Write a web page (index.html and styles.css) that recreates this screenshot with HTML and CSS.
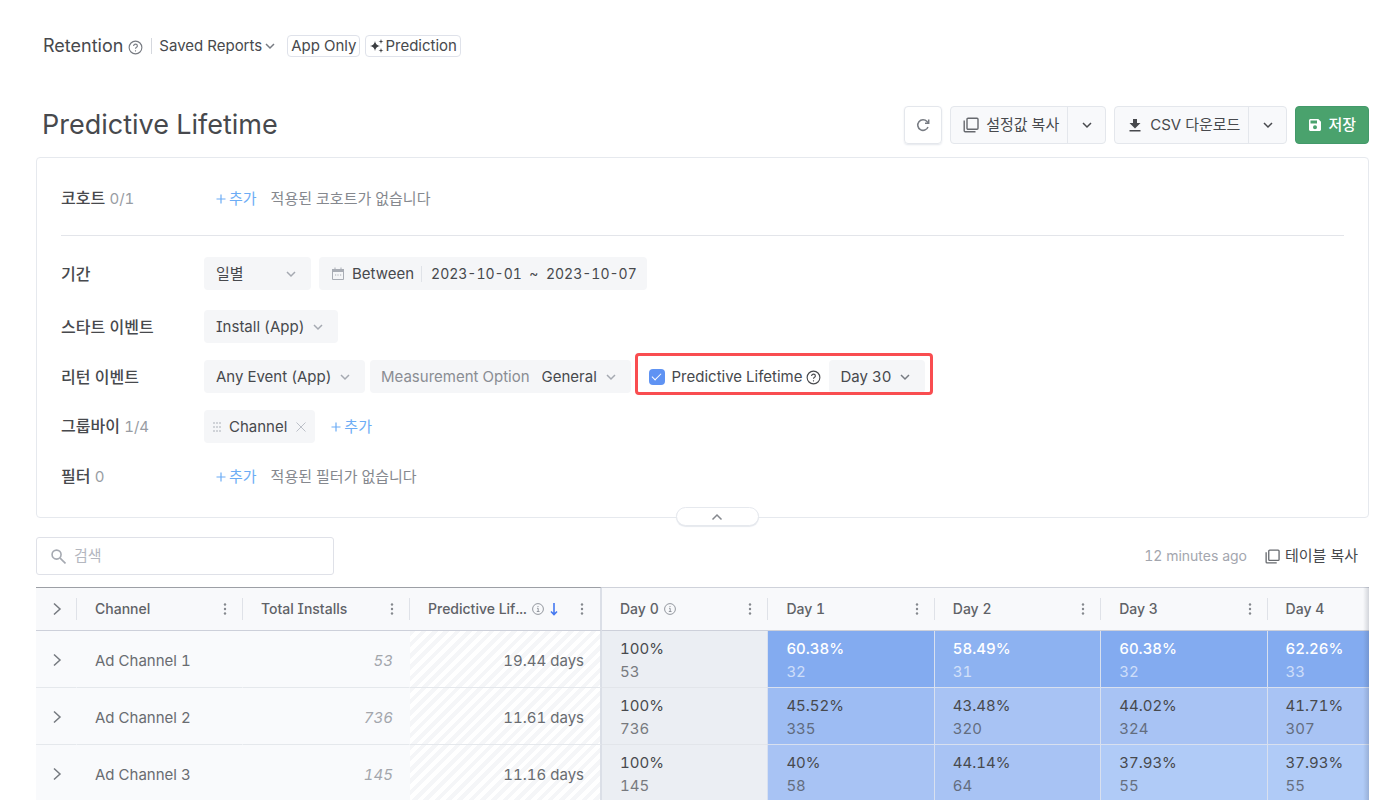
FILE: index.html
```html
<!DOCTYPE html>
<html lang="ko">
<head>
  <meta charset="UTF-8">
  <meta name="viewport" content="width=device-width, initial-scale=1">
  <title>Retention - Predictive Lifetime</title>
  <link rel="stylesheet" href="styles.css">
</head>
<body>

  <!-- 공통 아이콘 -->
  <svg class="sprite" aria-hidden="true">
    <symbol id="chevron" viewBox="0 0 12 12"><path d="M2 4l4 4 4-4"/></symbol>
    <symbol id="chevron-up" viewBox="0 0 12 12"><path d="M1.500 8.500L6 4l4.500 4.500"/></symbol>
    <symbol id="expand" viewBox="0 0 12 14"><path d="M3 1.500L9 7l-6 5.500"/></symbol>
    <symbol id="help" viewBox="0 0 16 16"><circle cx="8" cy="8" r="6.800"/><path d="M6 6.400c0-1.200.9-2 2-2s2 .8 2 1.900c0 1.500-2 1.500-2 3"/><path d="M8 11v1.200"/></symbol>
    <symbol id="info" viewBox="0 0 12 12"><circle cx="6" cy="6" r="5.400"/><path d="M5 5.300h1.200v3.200M4.800 8.500h2.700M6 3v1"/></symbol>
    <symbol id="copy" viewBox="0 0 16 16"><rect x="4" y="1.200" width="11" height="11" rx="1"/><path d="M1.200 3.500v10.300c0 .6.4 1 1 1h10.300"/></symbol>
    <symbol id="plus" viewBox="0 0 10 10"><path d="M5 .5v9M.5 5h9"/></symbol>
    <symbol id="dots" viewBox="0 0 4 12"><circle cx="2" cy="1.500" r="1.200"/><circle cx="2" cy="6" r="1.200"/><circle cx="2" cy="10.500" r="1.200"/></symbol>
  </svg>

  <header class="topbar">
    <span class="crumb">Retention</span>
    <svg class="icon help"><use href="#help"/></svg>
    <button class="saved">Saved Reports <svg class="icon chev"><use href="#chevron"/></svg></button>
    <span class="tag">App Only</span>
    <span class="tag"><svg class="spark" viewBox="0 0 14 14"><path d="M5 2Q5.600 6.400 10 7 5.600 7.600 5 12 4.400 7.600 0 7 4.400 6.400 5 2z"/><path d="M5 4l1.200 1.800L8 7 6.200 8.200 5 10 3.800 8.200 2 7l1.800-1.200z"/><path d="M11 0l.6 1.900 1.900.6-1.900.6L11 5l-.6-1.900-1.900-.6 1.900-.6zM11 9l.6 1.900 1.900.6-1.900.6L11 14l-.6-1.900-1.900-.6 1.900-.6z"/></svg>Prediction</span>
  </header>

  <main>
    <div class="title-row">
      <h1>Predictive Lifetime</h1>
      <div class="actions">
        <button class="btn refresh" aria-label="새로고침"><svg class="icon" viewBox="0 0 14 14"><path d="M12 9A5.300 5.300 0 1 1 11 3.500l1.500 1.500"/><path d="M12.700 1.500v3.800H9"/></svg></button>
        <div class="split">
          <button><svg class="icon copy"><use href="#copy"/></svg>설정값 복사</button>
          <button class="more" aria-label="더보기"><svg class="icon chev"><use href="#chevron"/></svg></button>
        </div>
        <div class="split">
          <button><svg class="fill download" viewBox="0 0 14 14"><path d="M5 1h4v4h3.500L7 10.500 1.500 5H5zM1.500 12h11v1.500h-11z"/></svg>CSV 다운로드</button>
          <button class="more" aria-label="더보기"><svg class="icon chev"><use href="#chevron"/></svg></button>
        </div>
        <button class="btn save"><svg class="fill" viewBox="0 0 14 14"><path fill-rule="evenodd" d="M2.500 1h7.800L13 3.700v7.800c0 .8-.7 1.500-1.500 1.500h-9C1.700 13 1 12.300 1 11.500v-9C1 1.700 1.700 1 2.500 1zm0 1.500v3h6.500v-3zM7 7.300a2 2 0 1 0 0 4 2 2 0 0 0 0-4z"/></svg>저장</button>
      </div>
    </div>

    <section class="panel">
      <div class="row cohort">
        <div class="name">코호트 <span>0/1</span></div>
        <button class="add"><svg class="icon"><use href="#plus"/></svg>추가</button>
        <span class="empty">적용된 코호트가 없습니다</span>
      </div>

      <div class="row period">
        <label class="name" for="period">기간</label>
        <div class="pick wide">
          <select id="period"><option>일별</option></select>
          <svg class="icon chev"><use href="#chevron"/></svg>
        </div>
        <button class="pill date">
          <svg class="calendar" viewBox="0 0 14 14"><path d="M1.500 2.500h11v10h-11z"/><path class="bar" d="M1 2h12v3H1z"/><path d="M4 .5V3M10 .5V3M4 8h1.200M6.400 8h1.200M9 8h1.200"/></svg>
          <span class="between">Between</span>
          <span class="range">2023-10-01 &nbsp;~&nbsp; 2023-10-07</span>
        </button>
      </div>

      <div class="row">
        <label class="name" for="start">스타트 이벤트</label>
        <div class="pick">
          <select id="start"><option>Install (App)</option></select>
          <svg class="icon chev"><use href="#chevron"/></svg>
        </div>
      </div>

      <div class="row">
        <label class="name" for="return">리턴 이벤트</label>
        <div class="pick return">
          <select id="return"><option>Any Event (App)</option></select>
          <svg class="icon chev"><use href="#chevron"/></svg>
        </div>
        <div class="pick measure">
          <label for="option">Measurement Option</label>
          <select id="option"><option>General</option></select>
          <svg class="icon chev"><use href="#chevron"/></svg>
        </div>
        <div class="predictive">
          <input type="checkbox" id="predictive" checked>
          <label for="predictive">Predictive Lifetime</label>
          <svg class="icon help"><use href="#help"/></svg>
          <div class="pick">
            <select aria-label="Day"><option>Day 30</option></select>
            <svg class="icon chev"><use href="#chevron"/></svg>
          </div>
        </div>
      </div>

      <div class="row">
        <div class="name">그룹바이 <span>1/4</span></div>
        <div class="pill group">
          <svg class="grip" viewBox="0 0 8 12"><circle cx="1" cy="2" r="1"/><circle cx="4" cy="2" r="1"/><circle cx="7" cy="2" r="1"/><circle cx="1" cy="6" r="1"/><circle cx="4" cy="6" r="1"/><circle cx="7" cy="6" r="1"/><circle cx="1" cy="10" r="1"/><circle cx="4" cy="10" r="1"/><circle cx="7" cy="10" r="1"/></svg>
          Channel
          <button aria-label="삭제"><svg class="icon" viewBox="0 0 10 10"><path d="M.5.5l9 9M9.500.5l-9 9"/></svg></button>
        </div>
        <button class="add"><svg class="icon"><use href="#plus"/></svg>추가</button>
      </div>

      <div class="row">
        <div class="name">필터 <span>0</span></div>
        <button class="add"><svg class="icon"><use href="#plus"/></svg>추가</button>
        <span class="empty">적용된 필터가 없습니다</span>
      </div>

      <button class="collapse" aria-label="접기"><svg class="icon"><use href="#chevron-up"/></svg></button>
    </section>

    <div class="tools">
      <label class="search">
        <svg class="icon" viewBox="0 0 14 14"><circle cx="5.200" cy="5.200" r="4.200"/><path d="M8.500 8.500l5 5"/></svg>
        <input type="text" placeholder="검색" aria-label="검색">
      </label>
      <span class="ago">12 minutes ago</span>
      <button class="copy-table"><svg class="icon copy"><use href="#copy"/></svg>테이블 복사</button>
    </div>

    <div class="table-wrap">
      <table>
        <colgroup>
          <col class="c-toggle"><col class="c-channel"><col class="c-installs"><col class="c-life">
          <col><col><col><col><col>
        </colgroup>
        <thead>
          <tr>
            <th class="pin"><div class="head toggle"><svg class="icon expand"><use href="#expand"/></svg></div></th>
            <th class="pin"><div class="head">Channel<svg class="dots"><use href="#dots"/></svg></div></th>
            <th class="pin"><div class="head">Total Installs<svg class="dots"><use href="#dots"/></svg></div></th>
            <th class="pin edge"><div class="head">Predictive Lif...<svg class="icon info"><use href="#info"/></svg><svg class="sort" viewBox="0 0 8 14"><path d="M4 1v11M1 9.500l3 3 3-3"/></svg><svg class="dots"><use href="#dots"/></svg></div></th>
            <th><div class="head">Day 0<svg class="icon info"><use href="#info"/></svg><svg class="dots"><use href="#dots"/></svg></div></th>
            <th><div class="head">Day 1<svg class="dots"><use href="#dots"/></svg></div></th>
            <th><div class="head">Day 2<svg class="dots"><use href="#dots"/></svg></div></th>
            <th><div class="head">Day 3<svg class="dots"><use href="#dots"/></svg></div></th>
            <th><div class="head">Day 4</div></th>
          </tr>
        </thead>
        <tbody>
          <tr>
            <td class="toggle"><svg class="icon expand"><use href="#expand"/></svg></td>
            <td>Ad Channel 1</td>
            <td class="installs">53</td>
            <td class="life edge">19.44 days</td>
            <td class="day zero">100%<span>53</span></td>
            <td class="day h5">60.38%<span>32</span></td>
            <td class="day h4">58.49%<span>31</span></td>
            <td class="day h5">60.38%<span>32</span></td>
            <td class="day h5">62.26%<span>33</span></td>
          </tr>
          <tr>
            <td class="toggle"><svg class="icon expand"><use href="#expand"/></svg></td>
            <td>Ad Channel 2</td>
            <td class="installs">736</td>
            <td class="life edge">11.61 days</td>
            <td class="day zero">100%<span>736</span></td>
            <td class="day h3">45.52%<span>335</span></td>
            <td class="day h2">43.48%<span>320</span></td>
            <td class="day h2">44.02%<span>324</span></td>
            <td class="day h2">41.71%<span>307</span></td>
          </tr>
          <tr>
            <td class="toggle"><svg class="icon expand"><use href="#expand"/></svg></td>
            <td>Ad Channel 3</td>
            <td class="installs">145</td>
            <td class="life edge">11.16 days</td>
            <td class="day zero">100%<span>145</span></td>
            <td class="day h2">40%<span>58</span></td>
            <td class="day h2">44.14%<span>64</span></td>
            <td class="day h1">37.93%<span>55</span></td>
            <td class="day h1">37.93%<span>55</span></td>
          </tr>
        </tbody>
      </table>
    </div>
  </main>

</body>
</html>
```
FILE: styles.css
```css
* {
  box-sizing: border-box;
}

body {
  margin: 0;
  padding: 29px 31px 0 36px;
  font-family: Inter, "Noto Sans CJK KR", sans-serif;
  font-feature-settings: "tnum", "cv08";
  font-size: 15px;
  line-height: 22px;
  color: #47494d;
  background: #fff;
  overflow: hidden;
}

button, select, input {
  font: inherit;
  font-feature-settings: inherit;
  color: inherit;
  background: none;
  border: none;
  padding: 0;
  margin: 0;
}

button {
  display: flex;
  align-items: center;
  white-space: nowrap;
  cursor: pointer;
}

svg {
  flex: none;
}

.sprite {
  display: none;
}

.icon {
  width: 12px;
  height: 12px;
  fill: none;
  stroke: currentColor;
  stroke-width: 1.5;
}

.icon.help {
  width: 15px;
  height: 15px;
  stroke-width: 1.2;
}

.icon.copy {
  width: 16px;
  height: 16px;
  stroke-width: 1.4;
  color: #66696e;
}

.icon.expand {
  height: 14px;
  color: #75797f;
}

.icon.info {
  stroke-width: 1;
  color: #93979e;
}

.fill {
  width: 14px;
  height: 14px;
  fill: currentColor;
}

/* 상단 */
.topbar {
  display: flex;
  align-items: center;
  height: 34px;
  padding-left: 7px;
}

.crumb {
  font-size: 18px;
}

.topbar .help {
  margin: 2px 8px 0 5px;
  color: #777b82;
}

.saved {
  height: 16px;
  padding-left: 7px;
  border-left: 1px solid #d5d8de;
  margin-right: 11px;
}

.saved .chev {
  margin-left: 2px;
  color: #777b82;
}

.tag {
  display: flex;
  align-items: center;
  height: 22px;
  padding: 0 3px;
  margin-right: 5px;
  border: 1px solid #dfe2ea;
  border-radius: 4px;
}

.spark {
  width: 14px;
  height: 14px;
  margin: 0 1px;
  fill: #3c3e42;
}

/* 제목 */
.title-row {
  display: flex;
  align-items: center;
  justify-content: space-between;
  margin-top: 43px;
  height: 38px;
}

h1 {
  margin: 0 0 0 6px;
  font-size: 27px;
  font-weight: 400;
  line-height: 38px;
}

.actions {
  display: flex;
  gap: 8px;
}

.btn, .split {
  height: 38px;
  border: 1px solid #e4e7ec;
  border-radius: 4px;
}

.refresh {
  width: 38px;
  justify-content: center;
  box-shadow: 0 1px 2px #e4e7ec;
}

.refresh .icon {
  width: 14px;
  height: 14px;
  color: #777b82;
}

.split {
  display: flex;
  background: #f8f9fb;
}

.split button {
  gap: 7px;
  padding: 0 8px 0 12px;
}

.split .download {
  margin: 0 1px;
}

.split .more {
  width: 38px;
  justify-content: center;
  padding: 0;
  border-left: 1px solid #e4e7ec;
}

.save {
  gap: 6px;
  padding: 0 12px;
  color: #fff;
  background: #4aa26d;
  border-color: #43996a;
  font-weight: 500;
}

/* 조건 패널 */
.panel {
  position: relative;
  margin-top: 13px;
  padding: 24px;
  border: 1px solid #e6e9ee;
  border-radius: 4px;
}

.row {
  display: flex;
  align-items: center;
  min-height: 33px;
  margin-bottom: 17px;
}

.row:last-of-type {
  margin-bottom: 0;
}

.row.cohort {
  min-height: 54px;
  padding-bottom: 20px;
  margin-bottom: 21px;
  border-bottom: 1px solid #e3e5ea;
}

.row.period {
  margin-bottom: 20px;
}

.name {
  width: 143px;
  font-size: 16px;
  font-weight: 500;
}

.name span {
  font-size: 15px;
  font-weight: 400;
  color: #989ca3;
}

.add {
  gap: 3px;
  padding-left: 12px;
  color: #6cacf5;
}

.add .icon {
  width: 10px;
  height: 10px;
  stroke-width: 1.2;
}

.empty {
  margin-left: 14px;
  color: #85888e;
}

.pill, .pick {
  height: 33px;
  border-radius: 4px;
  background: #f5f6f8;
}

.pick {
  position: relative;
  display: flex;
  align-items: center;
}

.pick select {
  appearance: none;
  height: 33px;
  padding: 0 33px 0 12px;
}

.pick .chev {
  position: absolute;
  right: 14px;
  color: #a5a9b1;
  pointer-events: none;
}

.pick.wide {
  margin-right: 8px;
}

.wide select {
  width: 107px;
}

.pick.return {
  margin-right: 5px;
}

.measure label {
  padding-left: 11px;
  color: #8a8d93;
}

.pill {
  display: flex;
  align-items: center;
}

.date {
  padding: 0 10px 0 12px;
}

.range {
  font-size: 14px;
}

.calendar {
  width: 14px;
  height: 14px;
  margin-right: 7px;
  fill: none;
  stroke: #a9adb5;
}

.calendar .bar {
  fill: #a9adb5;
  stroke: none;
}

.between {
  height: 16px;
  line-height: 16px;
  padding-right: 7px;
  margin-right: 9px;
  border-right: 1px solid #e0e3e8;
}

.predictive {
  position: relative;
  display: flex;
  align-items: center;
  margin-left: 18px;
}

/* 강조 테두리 */
.predictive::after {
  content: "";
  position: absolute;
  inset: -7px -8px -2px -14px;
  border: 3px solid #f94d50;
  border-radius: 4px;
  pointer-events: none;
}

.predictive input {
  appearance: none;
  display: grid;
  place-items: center;
  width: 16px;
  height: 16px;
  margin-right: 7px;
  border-radius: 4px;
  background: #5f93f3;
}

.predictive input:checked::before {
  content: "";
  width: 8px;
  height: 4px;
  margin-bottom: 2px;
  border: solid #fff;
  border-width: 0 0 1px 1px;
  transform: rotate(-45deg);
}

.predictive .help {
  margin: 2px 8px 0 3px;
}

.predictive .chev {
  color: #777b82;
}

.group {
  padding: 0 9px;
  margin-right: 4px;
}

.grip {
  width: 8px;
  height: 12px;
  margin-right: 8px;
  fill: #c3c7ce;
}

.group button {
  margin-left: 9px;
  color: #bcc0c8;
}

.group button .icon {
  width: 10px;
  height: 10px;
  stroke-width: 1;
}

.collapse {
  position: absolute;
  left: calc(50% - 27px);
  bottom: -9px;
  width: 83px;
  height: 19px;
  justify-content: center;
  background: #fff;
  border: 1px solid #e6e9ee;
  border-radius: 10px;
  box-shadow: 0 1px 1px #e6e9ee;
  color: #85888e;
}

/* 검색 */
.tools {
  display: flex;
  align-items: center;
  margin: 19px 0 12px;
  padding-right: 11px;
}

.search {
  display: flex;
  align-items: center;
  width: 298px;
  height: 38px;
  padding: 0 14px;
  border: 1px solid #dfe1e8;
  border-radius: 3px;
  margin-right: auto;
}

.search .icon {
  width: 15px;
  height: 15px;
  margin-right: 8px;
  color: #a5a9b1;
}

.search input {
  flex: 1;
  min-width: 0;
  outline: none;
}

.search input::placeholder {
  color: #b4b7bf;
}

.ago {
  margin-right: 18px;
  font-size: 14px;
  color: #a3a6ae;
}

.copy-table {
  gap: 5px;
}

.copy-table .copy {
  width: 15px;
  height: 15px;
}

/* 테이블 */
.table-wrap {
  position: relative;
  overflow: hidden;
}

.table-wrap::after {
  content: "";
  position: absolute;
  top: 0;
  right: 0;
  bottom: 0;
  width: 6px;
  background: linear-gradient(to right, rgba(60, 70, 90, 0), rgba(60, 70, 90, 0.2));
}

table {
  width: 1398px;
  table-layout: fixed;
  border-collapse: separate;
  border-spacing: 0;
}

.c-toggle {
  width: 41px;
}

.c-channel {
  width: 166px;
}

.c-installs {
  width: 167px;
}

.c-life {
  width: 192px;
}

th {
  height: 44px;
  padding: 0;
  background: #f8f9fb;
  border-top: 1px solid #cfd2da;
  border-bottom: 1px solid #cdd0da;
  font-size: 14px;
  font-weight: 500;
  color: #5f6267;
}

th.pin {
  border-top-color: #9c9fa5;
}

.head {
  display: flex;
  align-items: center;
  height: 22px;
  padding: 0 15px 0 18px;
  border-right: 1px solid #dfe2e8;
}

.head.toggle {
  padding: 0 0 0 15px;
}

.edge .head {
  padding-right: 16px;
  border-right: none;
}

.head .info {
  margin-left: 5px;
}

.dots {
  width: 4px;
  height: 12px;
  margin-left: auto;
  fill: #85888e;
}

.sort {
  width: 8px;
  height: 14px;
  margin-left: 6px;
  fill: none;
  stroke: #4478f0;
  stroke-width: 1.6;
}

td {
  height: 57px;
  padding: 3px 16px 0 18px;
  background: #f9fafc;
  border-right: 1px solid #f9fafc;
  border-bottom: 1px solid #e5e8ec;
  color: #696c71;
}

td.toggle {
  padding: 2px 0 0 15px;
}

td .expand {
  display: block;
}

.installs {
  text-align: right;
  font-style: italic;
  color: #a3a6ac;
}

.life {
  text-align: right;
  background: repeating-linear-gradient(135deg, #f5f6f8 0 4px, #fff 4px 8px);
}

.edge {
  border-right: 2px solid #dbdfe7;
}

.day {
  padding-top: 1px;
  line-height: 23px;
  border-right-color: #d8e0ef;
  border-bottom-color: #d8e0ef;
  color: #47494d;
}

.day span {
  display: block;
  opacity: 0.7;
}

.zero {
  background: #ebeef3;
  border-bottom-color: #e2e5ea;
}

.h1 {
  background: #b0cbf7;
}

.h2 {
  background: #a8c3f4;
}

.h3 {
  background: #9dbcf3;
}

.h4 {
  background: #8db2f1;
  color: #fff;
}

.h5 {
  background: #83abf0;
  color: #fff;
}

.h4, .h5 {
  font-weight: 500;
}

.h4 span, .h5 span {
  font-weight: 400;
  opacity: 0.6;
}
```
